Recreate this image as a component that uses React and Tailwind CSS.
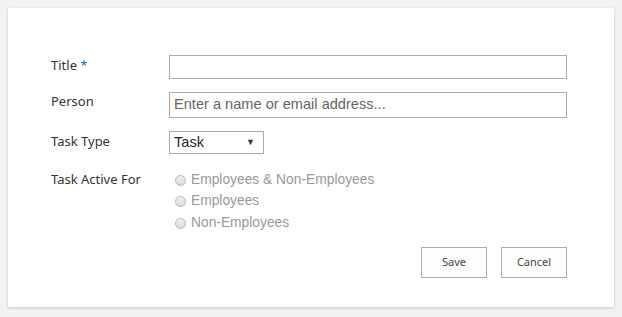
export default function App() {
  const label = "text-[13px] text-[#333333] leading-none pt-[4px]";
  const radios = ["Employees & Non-Employees", "Employees", "Non-Employees"];
  return (
    <div className="w-[622px] h-[317px] bg-[#f2f2f2] p-2" style={{ fontFamily: '"Noto Sans", "Open Sans", sans-serif' }}>
      <div className="w-[606px] h-[299px] bg-white shadow-[0_1px_3px_rgba(0,0,0,0.18)] pl-[43px] pt-[47px]">
        <div className="flex flex-col">
          <div className="flex items-start h-[24px]">
            <div className={`w-[118px] ${label}`}>Title <span className="text-[#0072c6]">*</span></div>
            <div className="w-[398px] h-[24px] border border-[#ababab]"></div>
          </div>
          <div className="flex items-start h-[26px] mt-[13px]">
            <div className={`w-[118px] ${label} !pt-[3px]`}>Person</div>
            <div className="w-[398px] h-[26px] border border-[#ababab] flex items-center pl-[4px] text-[14.6px] text-[#666666]" style={{ fontFamily: '"Liberation Sans", Arial, sans-serif' }}>
              Enter a name or email address...
            </div>
          </div>
          <div className="flex items-start h-[23px] mt-[13px]">
            <div className={`w-[118px] ${label}`}>Task Type</div>
            <div className="w-[95px] h-[23px] border border-[#ababab] flex items-center justify-between pl-[4px] pr-[8px] text-[14.6px] text-[#262626]" style={{ fontFamily: '"Liberation Sans", Arial, sans-serif' }}>
              <span>Task</span>
              <span className="text-[9px] text-[#333]">▼</span>
            </div>
          </div>
          <div className="flex mt-[18px]">
            <div className={`w-[124px] ${label} !pt-[1px]`}>Task Active For</div>
            <div className="flex flex-col gap-[5.5px]" style={{ fontFamily: '"Liberation Sans", Arial, sans-serif' }}>
              {radios.map((r) => (
                <div key={r} className="flex items-center h-[16px] text-[13.8px] text-[#999999]">
                  <span className="w-[11px] h-[11px] rounded-full border border-[#b5b5b5] bg-gradient-to-b from-[#f0f0f0] to-[#dcdcdc] mr-[5px]"></span>
                  {r}
                </div>
              ))}
            </div>
          </div>
          <div className="flex justify-end w-[516px] gap-[14px] mt-[16px]">
            <button className="w-[66px] h-[31px] border border-[#ababab] bg-[#fdfdfd] text-[11px] text-[#444444]">Save</button>
            <button className="w-[66px] h-[31px] border border-[#ababab] bg-[#fdfdfd] text-[11px] text-[#444444]">Cancel</button>
          </div>
        </div>
      </div>
    </div>
  );
}
